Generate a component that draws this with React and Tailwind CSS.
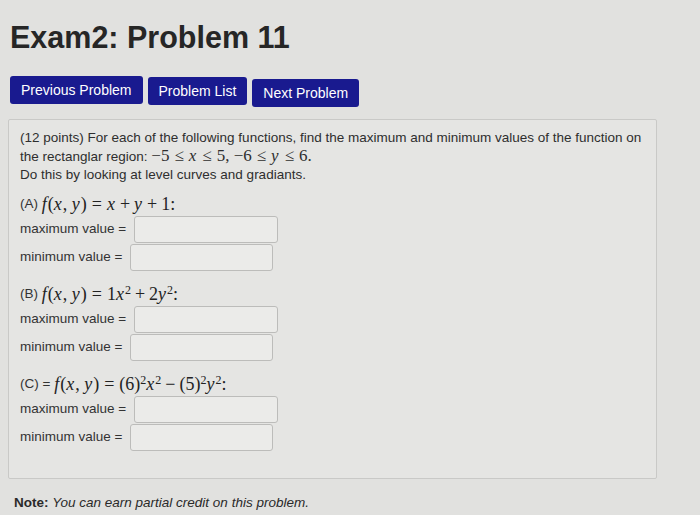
import React from 'react'

const sans = { fontFamily: '"Liberation Sans", Arial, sans-serif' }

function M({ children }) {
    return (
        <span className="text-[18px] text-[#222]" style={{ fontFamily: '"Liberation Serif", "DejaVu Serif", serif' }}>
            {children}
        </span>
    )
}

function V({ children }) {
    return <i className="pr-[1px]">{children}</i>
}

// relation / binary operator with TeX-like spacing
function Op({ children, rel }) {
    return <span className={rel ? 'mx-[5px]' : 'mx-[4px]'}>{children}</span>
}

function Sup({ children }) {
    return <sup className="text-[12px]">{children}</sup>
}

function Field({ label, width }) {
    return (
        <div className="flex items-center h-[28px]">
            <span className="text-[13.5px] text-[#333] mr-[8px]">{label} =</span>
            <div className={`${width} h-[27px] rounded-[3px] border border-[#bcbcba] bg-[#ebebe9]`} />
        </div>
    )
}

function Part({ head }) {
    return (
        <div className="flex flex-col">
            <div className="h-[22px] flex items-center text-[13.5px] text-[#333]">{head}</div>
            <Field label="maximum value" width="w-[144px]" />
            <Field label="minimum value" width="w-[143px]" />
        </div>
    )
}

const fxy = <><V>f</V>(<V>x</V>, <V>y</V>)</>

export default function App() {
    return (
        <div className="w-[700px] h-[515px] overflow-hidden bg-[#e1e1df] text-[#2a2a2a]" style={sans}>
            <h1 className="pt-[20px] pl-[10px] text-[30.5px] font-bold leading-[34px] text-[#262626]">
                Exam2: Problem 11
            </h1>
            <div className="flex gap-[5px] pl-[10px] mt-[22px]">
                <button className="h-[28px] px-[11px] rounded-[3px] bg-[#191a8f] text-white text-[14px]">Previous Problem</button>
                <button className="h-[28px] px-[11px] rounded-[3px] bg-[#191a8f] text-white text-[14px] mt-[1px]">Problem List</button>
                <button className="h-[28px] px-[11px] rounded-[3px] bg-[#191a8f] text-white text-[14px] mt-[3px]">Next Problem</button>
            </div>
            <div className="mt-[12px] ml-[8px] w-[649px] h-[360px] border border-[#c9c9c7] rounded-[2px] bg-[#e5e5e3] pl-[11px] pt-[9px]">
                <div className="text-[13.5px] leading-[18px] text-[#2e2e2e]">
                    <p>(12 points) For each of the following functions, find the maximum and minimum values of the function on</p>
                    <p>
                        the rectanglar region:{' '}
                        <span className="text-[17px]" style={{ fontFamily: '"Liberation Serif", serif' }}>
                            −5<Op rel>≤</Op><V>x</V><Op rel>≤</Op>5, −6<Op rel>≤</Op><V>y</V><Op rel>≤</Op>6.
                        </span>
                    </p>
                    <p>Do this by looking at level curves and gradiants.</p>
                </div>
                <div className="mt-[9px] flex flex-col gap-[12px]">
                    <Part
                        head={<>(A)&nbsp;<M>{fxy}<Op rel>=</Op><V>x</V><Op>+</Op><V>y</V><Op>+</Op>1:</M></>}
                    />
                    <Part
                        head={<>(B)&nbsp;<M>{fxy}<Op rel>=</Op>1<V>x</V><Sup>2</Sup><Op>+</Op>2<V>y</V><Sup>2</Sup>:</M></>}
                    />
                    <Part
                        head={<>(C) =&nbsp;<M>{fxy}<Op rel>=</Op>(6)<Sup>2</Sup><V>x</V><Sup>2</Sup><Op>−</Op>(5)<Sup>2</Sup><V>y</V><Sup>2</Sup>:</M></>}
                    />
                </div>
            </div>
            <p className="mt-[14px] pl-[14px] text-[13.5px] text-[#2a2a2a]">
                <b>Note:</b> <i>You can earn partial credit on this problem.</i>
            </p>
        </div>
    )
}
